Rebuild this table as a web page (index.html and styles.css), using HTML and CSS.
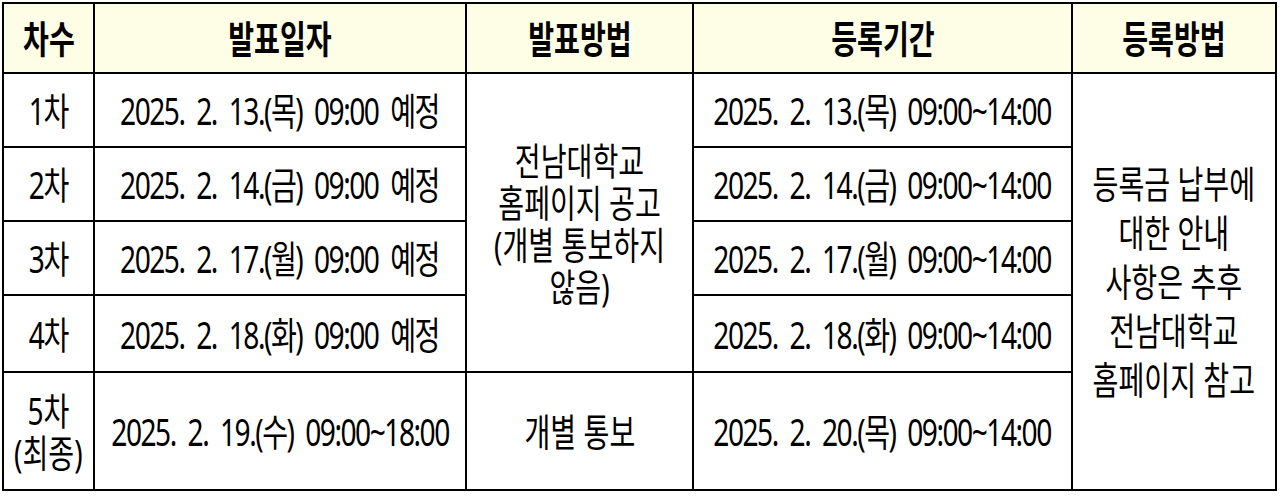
FILE: index.html
```html
<!DOCTYPE html>
<html lang="ko">
<head>
<meta charset="utf-8">
<title>발표 및 등록 일정</title>
<link rel="stylesheet" href="styles.css">
</head>
<body>
<table class="sched">
  <colgroup>
    <col class="c1"><col class="c2"><col class="c3"><col class="c4"><col class="c5">
  </colgroup>
  <thead>
    <tr class="rh">
      <th><div class="c"><span class="t">차수</span></div></th>
      <th><div class="c"><span class="t">발표일자</span></div></th>
      <th><div class="c"><span class="t">발표방법</span></div></th>
      <th><div class="c"><span class="t">등록기간</span></div></th>
      <th><div class="c"><span class="t">등록방법</span></div></th>
    </tr>
  </thead>
  <tbody>
    <tr class="r1">
      <td><div class="c"><span class="t d">1차</span></div></td>
      <td><div class="c"><span class="t d">2025. 2. 13.(목) 09:00 예정</span></div></td>
      <td rowspan="4"><div class="c"><span class="t ml">전남대학교<br>홈페이지 공고<br>(개별 통보하지<br>않음)</span></div></td>
      <td><div class="c"><span class="t d">2025. 2. 13.(목) 09:00~14:00</span></div></td>
      <td rowspan="5"><div class="c"><span class="t ml2">등록금 납부에<br>대한 안내<br>사항은 추후<br>전남대학교<br>홈페이지 참고</span></div></td>
    </tr>
    <tr class="r2">
      <td><div class="c"><span class="t d">2차</span></div></td>
      <td><div class="c"><span class="t d">2025. 2. 14.(금) 09:00 예정</span></div></td>
      <td><div class="c"><span class="t d">2025. 2. 14.(금) 09:00~14:00</span></div></td>
    </tr>
    <tr class="r3">
      <td><div class="c"><span class="t d">3차</span></div></td>
      <td><div class="c"><span class="t d">2025. 2. 17.(월) 09:00 예정</span></div></td>
      <td><div class="c"><span class="t d">2025. 2. 17.(월) 09:00~14:00</span></div></td>
    </tr>
    <tr class="r4">
      <td><div class="c"><span class="t d">4차</span></div></td>
      <td><div class="c"><span class="t d">2025. 2. 18.(화) 09:00 예정</span></div></td>
      <td><div class="c"><span class="t d">2025. 2. 18.(화) 09:00~14:00</span></div></td>
    </tr>
    <tr class="r5">
      <td><div class="c"><span class="t ml">5차<br>(최종)</span></div></td>
      <td><div class="c"><span class="t d">2025. 2. 19.(수) 09:00~18:00</span></div></td>
      <td><div class="c"><span class="t">개별 통보</span></div></td>
      <td><div class="c"><span class="t d">2025. 2. 20.(목) 09:00~14:00</span></div></td>
    </tr>
  </tbody>
</table>
</body>
</html>
```
FILE: styles.css
```css
html, body {
  margin: 0;
  padding: 0;
  background: #ffffff;
}
body {
  padding: 2px 0 0 2px;
  font-family: "Noto Sans", "Noto Sans CJK KR", sans-serif;
  color: #000;
}
.sched {
  border-collapse: collapse;
  table-layout: fixed;
  width: 1275px;
}
.c1 { width: 91px; }
.c2 { width: 372px; }
.c3 { width: 227px; }
.c4 { width: 379px; }
.c5 { width: 204px; }
.sched th,
.sched td {
  border: 2px solid #000;
  padding: 0;
  text-align: center;
  vertical-align: middle;
  font-size: 38px;
  line-height: 1;
}
.sched th {
  background: #fefee6;
  font-weight: 700;
}
.sched td {
  font-weight: 400;
}
.rh { height: 70px; }
.r1, .r2, .r3 { height: 74px; }
.r4 { height: 77px; }
.r5 { height: 118px; }
.c {
  display: flex;
  justify-content: center;
  align-items: center;
  width: 100%;
}
.t {
  display: block;
  flex: none;
  white-space: nowrap;
  transform: scaleX(0.74);
  transform-origin: center;
}
.d {
  letter-spacing: -2px;
  word-spacing: 8px;
}
.ml { line-height: 42px; }
.ml2 { line-height: 49px; }
```
